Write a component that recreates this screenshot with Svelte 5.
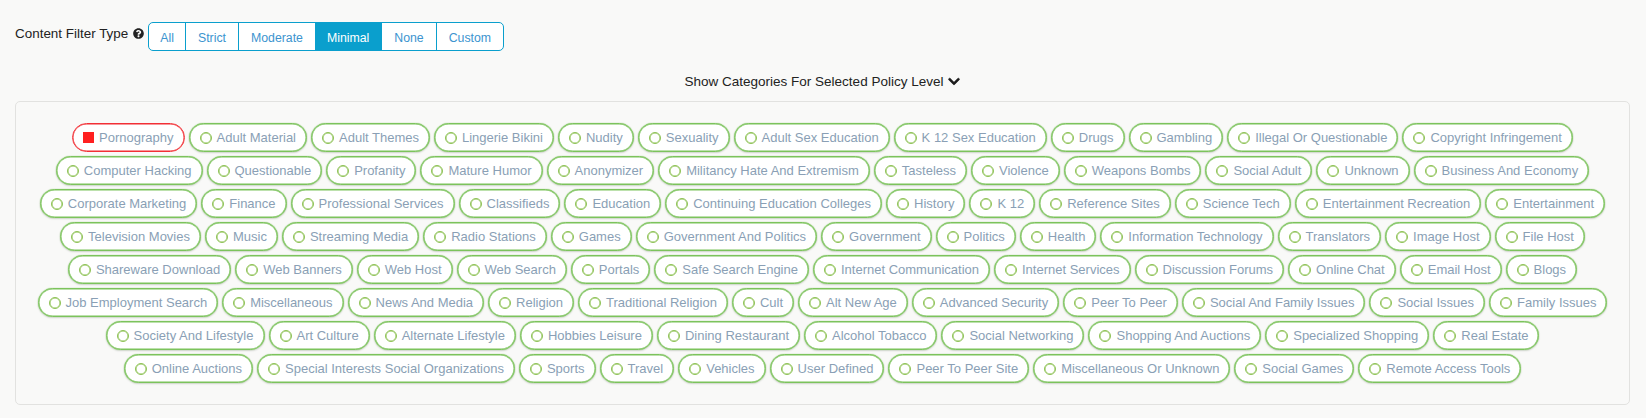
<script>
  const options = ['All', 'Strict', 'Moderate', 'Minimal', 'None', 'Custom'];
  const rows = [
    ['Pornography','Adult Material','Adult Themes','Lingerie Bikini','Nudity','Sexuality','Adult Sex Education','K 12 Sex Education','Drugs','Gambling','Illegal Or Questionable','Copyright Infringement'],
    ['Computer Hacking','Questionable','Profanity','Mature Humor','Anonymizer','Militancy Hate And Extremism','Tasteless','Violence','Weapons Bombs','Social Adult','Unknown','Business And Economy'],
    ['Corporate Marketing','Finance','Professional Services','Classifieds','Education','Continuing Education Colleges','History','K 12','Reference Sites','Science Tech','Entertainment Recreation','Entertainment'],
    ['Television Movies','Music','Streaming Media','Radio Stations','Games','Government And Politics','Government','Politics','Health','Information Technology','Translators','Image Host','File Host'],
    ['Shareware Download','Web Banners','Web Host','Web Search','Portals','Safe Search Engine','Internet Communication','Internet Services','Discussion Forums','Online Chat','Email Host','Blogs'],
    ['Job Employment Search','Miscellaneous','News And Media','Religion','Traditional Religion','Cult','Alt New Age','Advanced Security','Peer To Peer','Social And Family Issues','Social Issues','Family Issues'],
    ['Society And Lifestyle','Art Culture','Alternate Lifestyle','Hobbies Leisure','Dining Restaurant','Alcohol Tobacco','Social Networking','Shopping And Auctions','Specialized Shopping','Real Estate'],
    ['Online Auctions','Special Interests Social Organizations','Sports','Travel','Vehicles','User Defined','Peer To Peer Site','Miscellaneous Or Unknown','Social Games','Remote Access Tools']
  ];
</script>

<div class="page">
  <div class="filter">
    <span class="label">Content Filter Type</span>
    <svg class="help" viewBox="0 0 512 512" aria-hidden="true"><path fill="#222" d="M504 256c0 137-111 248-248 248S8 393 8 256 119 8 256 8s248 111 248 248zM263 90c-54 0-89 23-116 64-4 5-3 12 3 16l35 26c5 4 13 3 17-2 18-23 30-36 57-36 20 0 45 13 45 33 0 15-12 23-33 34-23 13-54 30-54 71v6c0 7 5 12 12 12h56c7 0 12-5 12-12v-2c0-29 84-30 84-107 0-58-60-103-118-103zm-7 248c-26 0-46 21-46 46s20 46 46 46 46-21 46-46-20-46-46-46z"/></svg>
    <div class="group">
      {#each options as o}
        <span class="opt" class:active={o === 'Minimal'}>{o}</span>
      {/each}
    </div>
  </div>
  <div class="toggle">
    <span>Show Categories For Selected Policy Level</span>
    <svg class="chev" viewBox="0 0 448 512" aria-hidden="true"><path fill="#1c1c1c" stroke="#1c1c1c" stroke-width="24" d="M207 381 13 187c-9-9-9-24 0-34l23-23c9-9 24-9 34 0l154 154 154-154c10-9 25-9 34 0l23 23c9 10 9 25 0 34L241 381c-9 9-25 9-34 0z"/></svg>
  </div>
  <div class="panel">
    {#each rows as row}
      <div class="row">
        {#each row as c}
          <span class="chip" class:blocked={c === 'Pornography'}>
            <span class="mark"></span>{c}
          </span>
        {/each}
      </div>
    {/each}
  </div>
</div>

<style>
  :global(body) { margin: 0; background: #f9f9f8; }
  .page { width: 1646px; height: 418px; box-sizing: border-box; padding: 22px 16px 0 15px; font-family: "Liberation Sans", Arial, sans-serif; font-size: 13px; overflow: hidden; }
  .filter { display: flex; align-items: flex-start; height: 29px; }
  .label { color: #222; font-size: 13.45px; line-height: 23px; }
  .help { width: 11px; height: 11px; margin: 6px 4px 0 5px; }
  .group { display: flex; height: 29px; box-sizing: border-box; border: 1px solid #0a9fcd; border-radius: 5px; overflow: hidden; background: #fff; }
  .opt { display: flex; align-items: center; padding: 2px 12px 0; color: #3c94cf; border-left: 1px solid #0a9fcd; font-size: 12.3px; }
  .opt:first-child { border-left: 0; padding: 2px 11px 0; }
  .active { background: #0a9fcd; color: #fff; border-left: 0; }
  .toggle { display: flex; justify-content: center; align-items: center; height: 20px; margin-top: 20px; color: #222; gap: 5px; font-size: 13.5px; }
  .chev { width: 12px; height: 13px; }
  .panel { margin-top: 10px; height: 304px; box-sizing: border-box; border: 1px solid #e2e2e0; border-radius: 5px; padding: 21px 0 0; }
  .row { display: flex; justify-content: center; gap: 4px; height: 33px; }
  .chip { display: flex; align-items: center; box-sizing: border-box; height: 29px; padding: 0 10px; background: #fff; border: 1px solid #7cc35c; border-radius: 15px; color: #8a9fb5; box-shadow: inset 0 0 0 .5px #7cc35c, 0 0 1px #7cc35c, 0 1px 2px rgba(0,0,0,.14); white-space: nowrap; }
  .mark { width: 12px; height: 12px; box-sizing: border-box; border: 1px solid #8cc152; box-shadow: inset 0 0 0 .5px #8cc152; border-radius: 50%; margin-right: 5px; flex: none; }
  .blocked { border-color: #f22f35; box-shadow: inset 0 0 0 .5px #f22f35; }
  .blocked .mark { background: #ff2020; border: 0; border-radius: 0; box-shadow: none; width: 11px; height: 11px; margin-right: 5px; }
</style>
